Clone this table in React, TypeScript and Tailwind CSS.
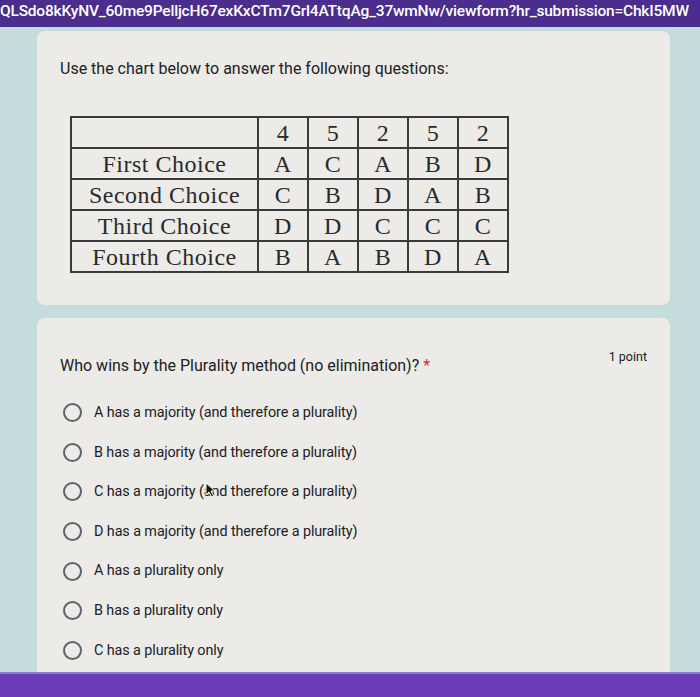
import React from 'react';

const votes = ['4', '5', '2', '5', '2'];

const rows: { label: string; picks: string[] }[] = [
    { label: 'First Choice', picks: ['A', 'C', 'A', 'B', 'D'] },
    { label: 'Second Choice', picks: ['C', 'B', 'D', 'A', 'B'] },
    { label: 'Third Choice', picks: ['D', 'D', 'C', 'C', 'C'] },
    { label: 'Fourth Choice', picks: ['B', 'A', 'B', 'D', 'A'] },
];

const options = [
    'A has a majority (and therefore a plurality)',
    'B has a majority (and therefore a plurality)',
    'C has a majority (and therefore a plurality)',
    'D has a majority (and therefore a plurality)',
    'A has a plurality only',
    'B has a plurality only',
    'C has a plurality only',
];

const Cursor: React.FC = () => (
    <svg className="absolute left-[145px] top-[10px] w-[11px] h-[16px]" viewBox="0 0 11 16">
        <path d="M1 1 L1 13 L4 10 L6.5 15 L8.5 14 L6 9 L10 9 Z" fill="#111" stroke="#fff" strokeWidth={1} strokeLinejoin="round" />
    </svg>
);

const App: React.FC = () => {
    return (
        <div className="w-[700px] h-[697px] flex flex-col bg-[#c4dcdb] overflow-hidden font-['Roboto','Liberation_Sans',sans-serif] text-[#202124]">
            {/* address bar */}
            <div className="h-[27px] bg-[#4a2d8c] flex items-center overflow-hidden">
                <span className="whitespace-nowrap text-white text-[15.5px] font-medium tracking-[-0.2px] -mt-[4px]">
                    QLSdo8kKyNV_60me9PelljcH67exKxCTm7Grl4ATtqAg_37wmNw/viewform?hr_submission=ChkI5MW
                </span>
            </div>

            <div className="flex-1 flex flex-col gap-[13px] pl-[37px] pr-[30px] pt-[4px] min-h-0">
                {/* chart card */}
                <div className="bg-[#ecebe8] rounded-lg pt-[28px] pl-[23px] pb-[32px]">
                    <p className="text-[16px] leading-5">Use the chart below to answer the following questions:</p>
                    <table className="mt-[37px] ml-[10px] border-collapse border-2 border-[#3a3a3a] font-['Liberation_Serif',serif] text-[24px] tracking-[0.5px] text-[#2a2a2a]">
                        <tbody>
                            <tr className="h-[31px]">
                                <td className="w-[187px] border-2 border-[#3a3a3a]"></td>
                                {votes.map((v, i) => (
                                    <td key={i} className="w-[50px] border-2 border-[#3a3a3a] text-center leading-none">{v}</td>
                                ))}
                            </tr>
                            {rows.map(r => (
                                <tr key={r.label} className="h-[31px]">
                                    <td className="border-2 border-[#3a3a3a] text-center leading-none">{r.label}</td>
                                    {r.picks.map((p, i) => (
                                        <td key={i} className="border-2 border-[#3a3a3a] text-center leading-none">{p}</td>
                                    ))}
                                </tr>
                            ))}
                        </tbody>
                    </table>
                </div>

                {/* question card */}
                <div className="flex-1 bg-[#ecebe8] rounded-t-lg pt-[36px] pl-[23px] pr-[23px]">
                    <div className="flex justify-between items-start">
                        <p className="mt-[2px] text-[16px] leading-5">
                            Who wins by the Plurality method (no elimination)? <span className="text-[#d93025]">*</span>
                        </p>
                        <span className="text-[12.5px] -mt-[6px]">1 point</span>
                    </div>
                    <div className="mt-[17px] flex flex-col">
                        {options.map((o, i) => (
                            <label key={o} className="relative h-[39.6px] flex items-center gap-[12px] pl-[3px]">
                                <span className="w-[19px] h-[19px] rounded-full border-2 border-[#5f6368]"></span>
                                <span className="text-[14.4px] tracking-[-0.1px]">{o}</span>
                                {i === 2 && <Cursor />}
                            </label>
                        ))}
                    </div>
                </div>
            </div>

            {/* taskbar strip */}
            <div className="h-[25px] bg-[#6a3cb6] border-t-2 border-[#8f7bd8]"></div>
        </div>
    );
};

export default App;
